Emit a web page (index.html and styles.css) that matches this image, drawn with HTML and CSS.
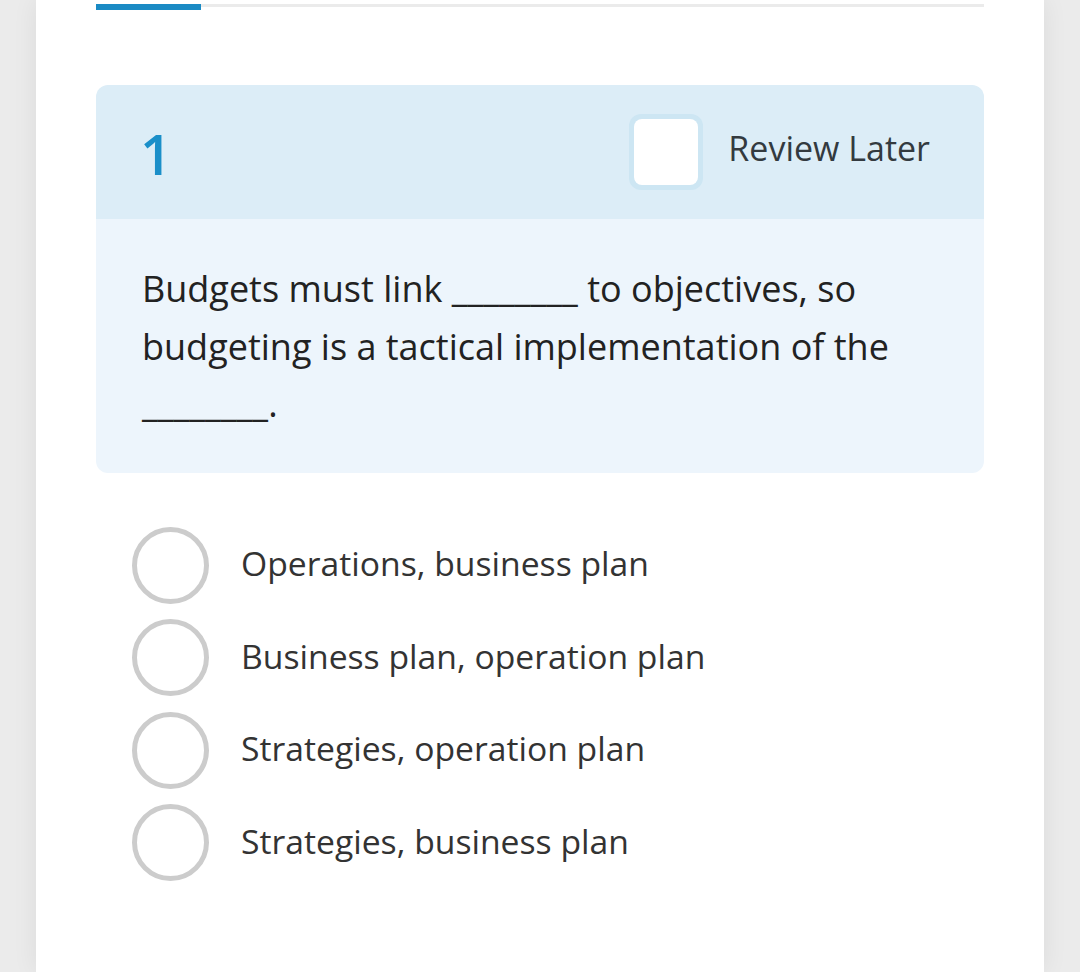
FILE: index.html
```html
<!DOCTYPE html>
<html>
<head>
<meta charset="utf-8">
<link rel="stylesheet" href="styles.css">
</head>
<body>
<div class="page">
  <div class="sheet">
    <div class="progress"><div class="progress-fill" style="width:105px"></div></div>
    <div class="question">
      <div class="q-head">
        <span class="q-num">1</span>
        <label class="review">
          <span class="checkbox"><span class="checkbox-inner"></span></span>
          <span class="review-text">Review Later</span>
        </label>
      </div>
      <div class="q-body">Budgets must link ________ to objectives, so budgeting is a tactical implementation of the ________.</div>
    </div>
    <ul class="options">
      <li class="option"><span class="radio"></span><span class="opt-text">Operations, business plan</span></li>
      <li class="option"><span class="radio"></span><span class="opt-text">Business plan, operation plan</span></li>
      <li class="option"><span class="radio"></span><span class="opt-text">Strategies, operation plan</span></li>
      <li class="option"><span class="radio"></span><span class="opt-text">Strategies, business plan</span></li>
    </ul>
  </div>
</div>
</body>
</html>
```

FILE: styles.css
```css
html, body {
  margin: 0;
  padding: 0;
}
body {
  background: #ebebeb;
  font-family: "Open Sans", "Noto Sans", sans-serif;
  width: 1080px;
  height: 972px;
  overflow: hidden;
}
.page {
  padding: 0 36px;
  height: 972px;
  box-sizing: border-box;
}
.sheet {
  background: #ffffff;
  height: 972px;
  box-sizing: border-box;
  padding: 4px 60px 0;
  box-shadow: 0 0 24px rgba(0, 0, 0, 0.07);
}
.progress {
  height: 3px;
  background: #ebebeb;
  position: relative;
}
.progress-fill {
  height: 6px;
  background: #1a8ac4;
}
.question {
  margin-top: 78px;
  border-radius: 12px;
  overflow: hidden;
}
.q-head {
  background: #dcedf7;
  height: 134px;
  display: flex;
  align-items: center;
  padding: 0 54px 0 44px;
}
.q-num {
  font-size: 56px;
  font-weight: 600;
  color: #1a8fc9;
  line-height: 1;
  margin-top: 2px;
  flex: 1;
}
.review {
  display: flex;
  align-items: center;
  gap: 25px;
}
.checkbox {
  width: 74px;
  height: 76px;
  box-sizing: border-box;
  border-radius: 12px;
  background: #cde6f3;
  padding: 5px;
  display: flex;
}
.checkbox-inner {
  flex: 1;
  background: #ffffff;
  border-radius: 8px;
}
.review-text {
  font-size: 34px;
  color: #333a3f;
  margin-top: -8px;
}
.q-body {
  background: #edf5fc;
  padding: 41px 46px 40px;
  font-size: 36px;
  line-height: 57.6px;
  color: #222222;
}
.options {
  list-style: none;
  margin: 0;
  padding: 54px 0 0 36px;
  display: flex;
  flex-direction: column;
  gap: 15.5px;
}
.option {
  display: flex;
  align-items: center;
  gap: 32px;
}
.radio {
  width: 77px;
  height: 77px;
  box-sizing: border-box;
  border: 5px solid #cccccc;
  border-radius: 50%;
  flex: none;
}
.opt-text {
  font-size: 33.7px;
  color: #333333;
  margin-top: -4px;
}
```
